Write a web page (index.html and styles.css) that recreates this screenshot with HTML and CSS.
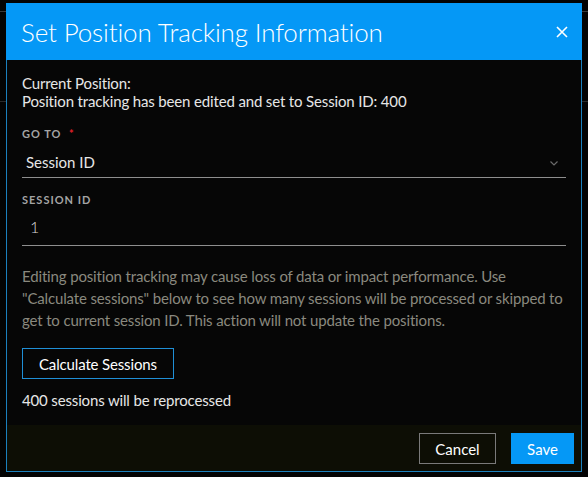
FILE: index.html
```html
<!DOCTYPE html>
<html lang="en">
<head>
  <meta charset="UTF-8">
  <meta name="viewport" content="width=device-width, initial-scale=1.0">
  <title>Set Position Tracking Information</title>
  <link rel="stylesheet" href="styles.css">
</head>
<body>
  <div class="backdrop-line top"></div>
  <div class="backdrop-line mid"></div>
  <div class="modal">
    <div class="modal-header">
      <h1 class="modal-title">Set Position Tracking Information</h1>
      <button class="close" aria-label="Close">
        <svg width="12" height="12" viewBox="0 0 12 12"><path d="M1 1 L11 11 M11 1 L1 11" stroke="#fff" stroke-width="1.6" fill="none"/></svg>
      </button>
    </div>
    <div class="modal-body">
      <p class="current">Current Position:<br>Position tracking has been edited and set to Session ID: 400</p>

      <label class="field-label">Go to <span class="required">*</span></label>
      <div class="select">
        <span>Session ID</span>
        <svg class="chevron" width="8" height="5" viewBox="0 0 8 5"><path d="M0.5 0.5 L4 4 L7.5 0.5" stroke="#6a6a6a" stroke-width="1.2" fill="none"/></svg>
      </div>

      <label class="field-label spaced">Session ID</label>
      <div class="input">1</div>

      <p class="hint">Editing position tracking may cause loss of data or impact performance. Use "Calculate sessions" below to see how many sessions will be processed or skipped to get to current session ID. This action will not update the positions.</p>

      <button class="button outline">Calculate Sessions</button>
      <p class="result">400 sessions will be reprocessed</p>
    </div>
    <div class="modal-footer">
      <button class="button secondary">Cancel</button>
      <button class="button primary">Save</button>
    </div>
  </div>
</body>
</html>
```

FILE: styles.css
```css
* {
  box-sizing: border-box;
  font-family: Lato, 'Noto Sans', sans-serif;
}
body {
  margin: 0;
  background: #030303;
  color: #e6e6e6;
  position: relative;
}
.backdrop-line {
  position: absolute;
  left: 0;
  right: 0;
  height: 1px;
  background: #3a3a3a;
}
.backdrop-line.top {
  top: 11px;
}
.backdrop-line.mid {
  top: 101px;
  background: #2a2a2a;
}
.modal {
  position: relative;
  margin: 3px 0 0 6px;
  width: 576px;
  border: 1px solid #1b80bd;
  border-top: 0;
  background: #060606;
}
.modal-header {
  height: 57px;
  background: #0598f6;
  display: flex;
  align-items: center;
  justify-content: space-between;
  padding: 0 14px 0 15px;
  margin: 0 -1px;
}
.modal-title {
  margin: 0;
  font-weight: 300;
  font-size: 26px;
  color: #fff;
  letter-spacing: -0.15px;
}
.close {
  background: none;
  border: 0;
  padding: 0;
  width: 12px;
  height: 12px;
  display: flex;
}
.modal-body {
  padding: 14px 15px 16px;
}
.current {
  margin: 0;
  font-size: 15px;
  line-height: 18px;
  letter-spacing: -0.15px;
}
.field-label {
  display: block;
  margin-top: 17px;
  font-size: 11px;
  line-height: 14px;
  font-weight: 700;
  letter-spacing: 1px;
  text-transform: uppercase;
  color: #a4a4a4;
}
.field-label.spaced {
  margin-top: 15px;
}
.required {
  color: #e0202a;
  margin-left: 4px;
}
.select {
  margin-top: 5px;
  padding: 6px 8px 5px 4px;
  border-bottom: 1px solid #8e8e8e;
  font-size: 15px;
  line-height: 20px;
  display: flex;
  align-items: center;
  justify-content: space-between;
}
.chevron {
  margin-top: 3px;
}
.input {
  margin-top: 5px;
  padding: 5px 8px 8px 8px;
  border-bottom: 1px solid #8e8e8e;
  font-size: 16px;
  line-height: 20px;
  font-weight: 300;
  color: #d8d8d8;
}
.hint {
  margin: 19px 0 0;
  font-size: 15px;
  line-height: 22px;
  letter-spacing: -0.15px;
  color: #8a897f;
}
.button {
  font-size: 15px;
  height: 31px;
  padding: 0 15px;
  color: #fff;
  background: transparent;
  cursor: pointer;
}
.outline {
  margin-top: 17px;
  padding: 0 16px;
  border: 1px solid #1f8fd6;
  letter-spacing: -0.15px;
  white-space: nowrap;
}
.result {
  margin: 12px 0 0;
  font-size: 15px;
  line-height: 18px;
  letter-spacing: -0.15px;
}
.modal-footer {
  height: 46px;
  background: #0d0e05;
  display: flex;
  justify-content: flex-end;
  align-items: flex-start;
  gap: 15px;
  padding: 8px 7px 0 0;
}
.secondary {
  border: 1px solid #7a7a7a;
  width: 77px;
}
.primary {
  border: 0;
  background: #0598f6;
  width: 63px;
}
```
